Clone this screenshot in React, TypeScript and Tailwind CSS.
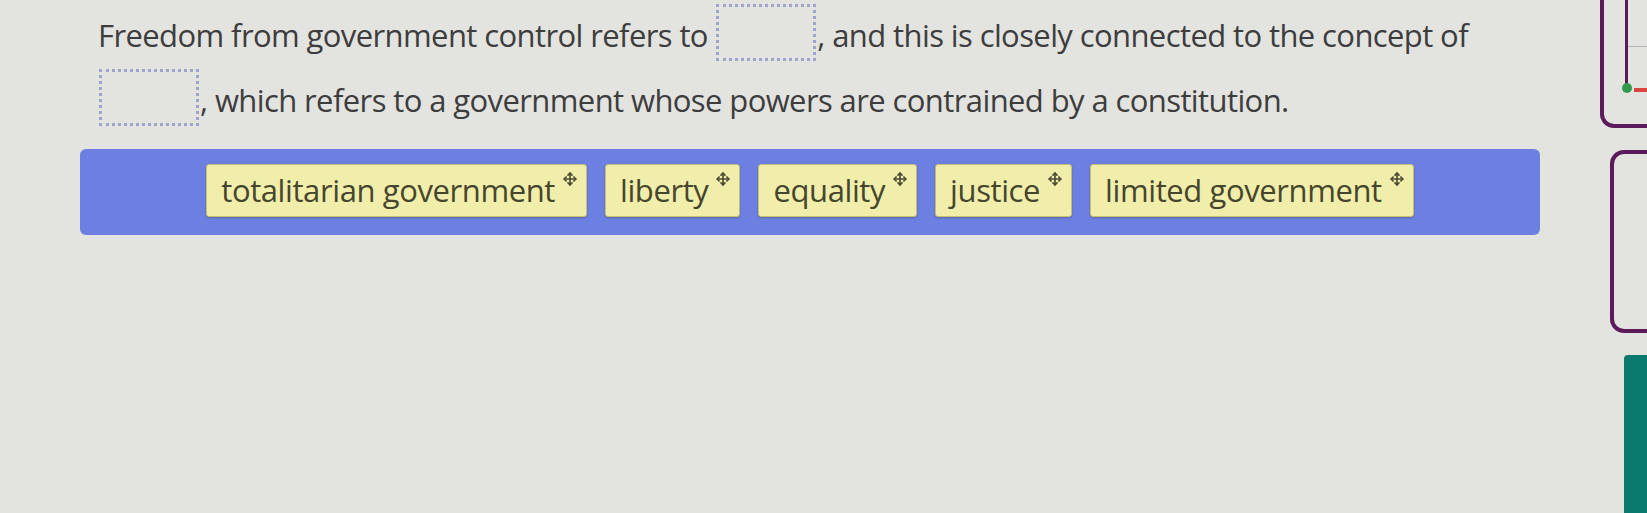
import React from "react";

const words = [
  "totalitarian government",
  "liberty",
  "equality",
  "justice",
  "limited government",
];

function Blank() {
  return (
    <span className="mx-[1px] inline-block h-[57px] w-[100px] border-[3px] border-dotted border-[#9ea4cc] align-[-14px]" />
  );
}

function MoveIcon() {
  return (
    <svg width="14" height="14" viewBox="0 0 14 14" className="mt-[7px] ml-[8px] shrink-0" aria-hidden="true">
      <g fill="none" stroke="#4d4b34" strokeWidth="1.7" strokeLinecap="round" strokeLinejoin="round">
        <path d="M7 1.2v11.6" />
        <path d="M1.2 7h11.6" />
        <path d="M5 3.1 7 1.2l2 1.9" />
        <path d="M5 10.9 7 12.8l2-1.9" />
        <path d="M3.1 5 1.2 7l1.9 2" />
        <path d="M10.9 5 12.8 7l-1.9 2" />
      </g>
    </svg>
  );
}

function Chip({ label }: { label: string }) {
  return (
    <div className="flex h-[53px] items-start rounded-[3px] border border-[#c6bd74] bg-[#f0eeaa] pl-[14px] pr-[9px] shadow-[0_1px_2px_rgba(60,60,20,0.35)]">
      <span className="text-[31px] leading-[51px] tracking-[-0.4px] text-[#46452d]">{label}</span>
      <MoveIcon />
    </div>
  );
}

export default function App() {
  return (
    <div className="flex h-[513px] w-full overflow-hidden bg-[#e3e3e0] font-['Open_Sans',sans-serif]">
      <main className="w-[1540px] shrink-0 pl-[80px]">
        <p className="pl-[18px] pt-[3px] text-[31px] leading-[65px] tracking-[-0.6px] text-[#3d3d3d]">
          Freedom from government control refers to <Blank />, and this is closely connected to the concept of
          <br />
          <Blank />, which refers to a government whose powers are contrained by a constitution.
        </p>
        <div className="mt-[16px] flex h-[86px] justify-center gap-[18px] rounded-[6px] bg-[#6c80e2] pt-[15px]">
          {words.map((w) => (
            <Chip key={w} label={w} />
          ))}
        </div>
      </main>

      <aside className="flex flex-1 flex-col pl-[60px]">
        <div className="-mt-[20px] h-[148px] shrink-0 rounded-l-[14px] border-[4px] border-r-0 border-[#5b1a5b]">
          <div className="relative ml-[21px] h-[104px] border-l-[3px] border-[#5b1a5b] pt-[62px]">
            <div className="h-px bg-[#b4b4b4]" />
            <span className="absolute -bottom-[5px] -left-[6px] h-[10px] w-[10px] rounded-full bg-[#2f9a4c]" />
            <span className="absolute -bottom-[4px] left-[6px] h-[4px] w-[20px] bg-[#d9453f]" />
          </div>
        </div>
        <div className="mt-[22px] ml-[10px] h-[183px] shrink-0 rounded-l-[14px] border-[4px] border-r-0 border-[#5b1a5b]" />
        <div className="mt-[22px] ml-[24px] flex-1 rounded-tl-[4px] bg-[#0b7a6e]" />
      </aside>
    </div>
  );
}
